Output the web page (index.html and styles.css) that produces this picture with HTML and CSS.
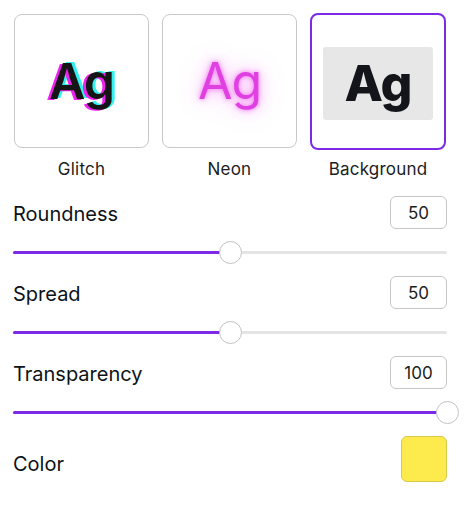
FILE: index.html
```html
<!DOCTYPE html>
<html>
<head>
<meta charset="utf-8">
<link rel="stylesheet" href="styles.css">
</head>
<body>
<div class="panel">
  <div class="effects">
    <div class="effect">
      <div class="card"><span class="ag glitch">Ag</span></div>
      <div class="effect-name">Glitch</div>
    </div>
    <div class="effect">
      <div class="card"><span class="ag neon">Ag</span></div>
      <div class="effect-name">Neon</div>
    </div>
    <div class="effect">
      <div class="card selected"><span class="ag bg">Ag</span></div>
      <div class="effect-name">Background</div>
    </div>
  </div>

  <div class="control">
    <div class="head"><span class="label">Roundness</span><span class="num">50</span></div>
    <div class="slider"><div class="track"><div class="fill" style="width:50%"></div><div class="thumb" style="left:50%"></div></div></div>
  </div>
  <div class="control">
    <div class="head"><span class="label">Spread</span><span class="num">50</span></div>
    <div class="slider"><div class="track"><div class="fill" style="width:50%"></div><div class="thumb" style="left:50%"></div></div></div>
  </div>
  <div class="control">
    <div class="head"><span class="label">Transparency</span><span class="num">100</span></div>
    <div class="slider"><div class="track"><div class="fill" style="width:100%"></div><div class="thumb" style="left:100%"></div></div></div>
  </div>
  <div class="color-row">
    <span class="label color-label">Color</span>
    <span class="swatch"></span>
  </div>
</div>
</body>
</html>
```
FILE: styles.css
```css
* { box-sizing: border-box; }
html, body { margin: 0; padding: 0; background: #fff; }
body {
  font-family: "Inter", "Noto Sans", sans-serif;
  color: #0d1216;
}
.panel {
  width: 474px;
  padding: 14px 27px 0 13px;
}
.effects {
  display: grid;
  grid-template-columns: 135px 135px 136px;
  column-gap: 13px;
  margin-left: 1px;
}
.effect {
  display: flex;
  flex-direction: column;
  align-items: center;
}
.card {
  width: 100%;
  height: 134px;
  border: 1px solid #c9c9c9;
  border-radius: 8px;
  display: flex;
  align-items: center;
  justify-content: center;
}
.card.selected {
  border: 2.5px solid #7d2ae8;
  height: 137px;
  margin-top: -1px;
  margin-bottom: -2px;
}
.effect-name {
  margin-top: 11px;
  font-size: 17px;
  line-height: 20px;
  letter-spacing: 0.2px;
  color: #1a1d21;
}
.ag {
  font-size: 50px;
  line-height: 1;
  letter-spacing: -1px;
}
.glitch {
  font-weight: 600;
  color: #151515;
  text-shadow: -3px 1px 0 #ee22ee, 3px -1px 0 #33f0f0;
}
.neon {
  font-weight: 400;
  color: #e040e2;
  text-shadow: 0 0 5px rgba(240, 60, 240, 0.7), 0 0 14px rgba(240, 80, 240, 0.45), 0 0 28px rgba(240, 100, 240, 0.25);
}
.bg {
  font-weight: 800;
  color: #13151a;
  background: #e7e7e7;
  border-radius: 3px;
  width: 110px;
  height: 73px;
  display: flex;
  align-items: center;
  justify-content: center;
  margin-top: 3px;
}
.control {
  display: flex;
  flex-direction: column;
}
.effects + .control { margin-top: 17px; }
.head {
  height: 33px;
  display: flex;
  align-items: center;
  justify-content: space-between;
}
.label {
  font-size: 20px;
  color: #0d1216;
  padding-top: 2px;
}
.num {
  width: 57px;
  height: 33px;
  border: 1px solid #c6c6c6;
  border-radius: 6px;
  display: flex;
  align-items: center;
  justify-content: center;
  font-size: 17px;
  color: #1a1d21;
}
.slider {
  height: 47px;
  padding-top: 22px;
}
.track {
  position: relative;
  height: 3px;
  background: #e4e4e4;
  border-radius: 2px;
}
.fill {
  height: 3px;
  background: #7d2ae8;
  border-radius: 2px;
}
.thumb {
  position: absolute;
  top: 50%;
  width: 23px;
  height: 23px;
  margin-left: -11.5px;
  margin-top: -11.5px;
  border-radius: 50%;
  background: #fff;
  border: 1px solid #c2c2c2;
}
.color-row {
  height: 46px;
  display: flex;
  align-items: center;
  justify-content: space-between;
}
.color-label { padding-top: 9px; }
.swatch {
  width: 46px;
  height: 46px;
  border-radius: 6px;
  background: #fdea4c;
  border: 1px solid #d8c94a;
}
```
